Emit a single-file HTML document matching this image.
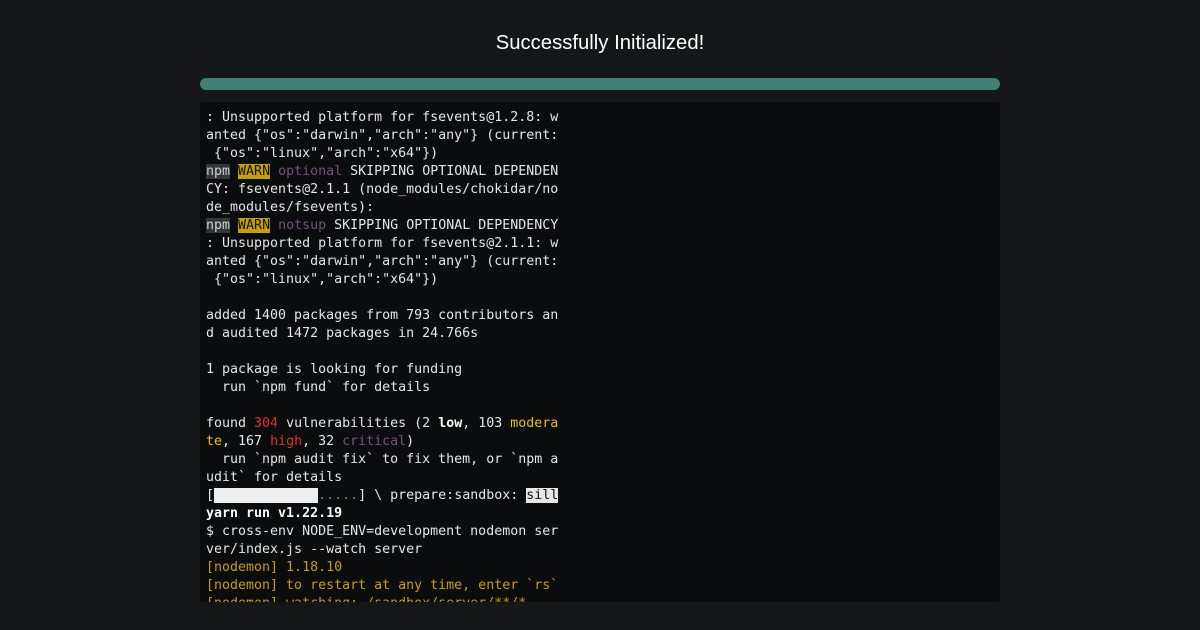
<!DOCTYPE html>
<html><head><meta charset="utf-8"><style>
html,body{margin:0;padding:0;background:#151618;width:1200px;height:630px;overflow:hidden}
h1{position:absolute;top:30px;left:0;width:1200px;text-align:center;margin:0;font:20.3px/26px "Liberation Sans",sans-serif;color:#fff;font-weight:normal}
.bar{position:absolute;left:200px;top:78px;width:800px;height:12px;border-radius:6px;background:#3e7f72}
.term{position:absolute;left:200px;top:102px;width:800px;height:500px;background:#0b0c0d;border-radius:3px;overflow:hidden}
pre{margin:0;padding:7px 0 0 6px;font:13.3px/18px "DejaVu Sans Mono",monospace;color:#e6e6e6;white-space:pre}
.g{background:#333638;color:#cfcfcf}.w{background:#c4a000;color:#111}.p{color:#75507b}
.r{color:#e03030}.y{color:#e6c200}.b{font-weight:bold;color:#fff}.o{color:#c4a000}
.s{background:#e6e6e6;color:#111}.blk{background:#eeeeee;color:#eeeeee}.d{color:#777}
</style></head><body>
<h1>Successfully Initialized!</h1>
<div class="bar"></div>
<div class="term"><pre>: Unsupported platform for fsevents@1.2.8: w
anted {"os":"darwin","arch":"any"} (current:
 {"os":"linux","arch":"x64"})
<span class="g">npm</span> <span class="w">WARN</span> <span class="p">optional</span> SKIPPING OPTIONAL DEPENDEN
CY: fsevents@2.1.1 (node_modules/chokidar/no
de_modules/fsevents):
<span class="g">npm</span> <span class="w">WARN</span> <span class="p">notsup</span> SKIPPING OPTIONAL DEPENDENCY
: Unsupported platform for fsevents@2.1.1: w
anted {"os":"darwin","arch":"any"} (current:
 {"os":"linux","arch":"x64"})

added 1400 packages from 793 contributors an
d audited 1472 packages in 24.766s

1 package is looking for funding
  run `npm fund` for details

found <span class="r">304</span> vulnerabilities (2 <span class="b">low</span>, 103 <span class="y">modera
te</span>, 167 <span class="r">high</span>, 32 <span class="p">critical</span>)
  run `npm audit fix` to fix them, or `npm a
udit` for details
[<span class="blk">#############</span><span class="d">.....</span>] \ prepare:sandbox: <span class="s">sill</span>
<span class="b">yarn run v1.22.19</span>
$ cross-env NODE_ENV=development nodemon ser
ver/index.js --watch server
<span class="o">[nodemon] 1.18.10</span>
<span class="o">[nodemon] to restart at any time, enter `rs`</span>
<span class="o">[nodemon] watching: /sandbox/server/**/*</span>
</pre></div>
</body></html>
